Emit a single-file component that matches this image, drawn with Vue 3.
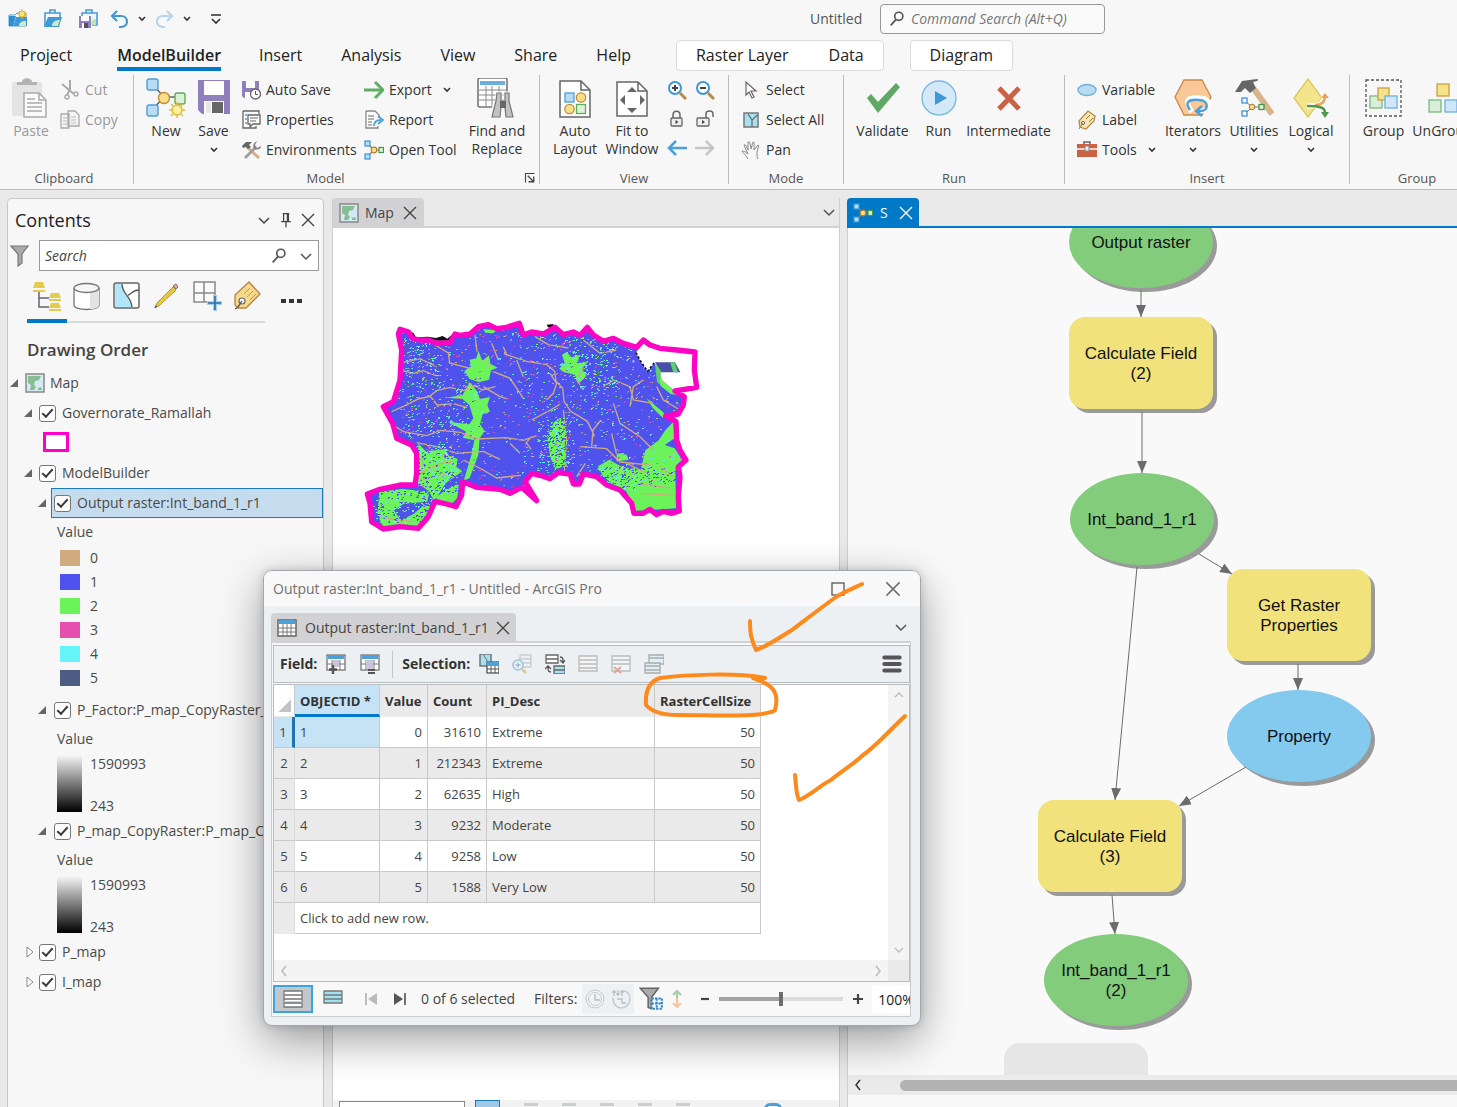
<script setup>
import { h, ref } from 'vue'

const glyphs = {
  newProject: '<path d="M1 6h6l2-2h9v13H1z" fill="#fff" stroke="#4a9bd4"/><path d="M1 7h7l-3 10H1z" fill="#2f8fd3"/><path d="M8 8h11v9H5z" fill="#3f9bd8"/><path d="M11 17c0-3 2-5 7-5v5z" fill="#cfe9c8"/><circle cx="14" cy="5" r="3" fill="#f6e27a" stroke="#dcb92e"/><path d="M14 0v2M14 8v2M9 5h2M17 5h2M11 2l1 1M16 7l1 1M17 2l-1 1M12 7l-1 1" stroke="#dcb92e"/>',
  openProject: '<path d="M2 17V4h15v5M7 4V1h5v3" fill="none" stroke="#4a9bd4" stroke-width="1.600"/><path d="M5 8h14l-3 10H1z" fill="#3f9bd8"/><path d="M9 17c0-4 3-6 8-6l-2 6z" fill="#cfe9c8"/>',
  saveProject: '<path d="M4 8V4h15v12h-5M8 4V1h6v3" fill="#e9f4fb" stroke="#4a9bd4" stroke-width="1.600"/><path d="M13 16c0-4 2-6 5-6v6z" fill="#bfe0b8"/><rect x="1" y="7" width="12" height="12" fill="#8f7fbd"/><rect x="3" y="7" width="8" height="5" fill="#fff"/><rect x="4" y="14" width="6" height="5" fill="#fff"/><rect x="6" y="14" width="4" height="5" fill="#555"/>',
  undo: '<path d="M7 2L2 7l5 5M2 7h9c8 0 8 11 0 11H9" fill="none" stroke="#3f97d3" stroke-width="2.200"/>',
  redo: '<path d="M12 2l5 5-5 5M17 7H8c-8 0-8 11 0 11h2" fill="none" stroke="#b5d6ea" stroke-width="2.200"/>',
  chev: '<path d="M7 8l3 3 3-3" fill="none" stroke="currentColor" stroke-width="1.600"/>',
  chevWide: '<path d="M5 8l5 5 5-5" fill="none" stroke="currentColor" stroke-width="1.500"/>',
  chevL: '<path d="M12 5l-4 5 4 5" fill="none" stroke="currentColor" stroke-width="1.500"/>',
  chevR: '<path d="M8 5l4 5-4 5" fill="none" stroke="currentColor" stroke-width="1.500"/>',
  chevU: '<path d="M6 12l4-4 4 4" fill="none" stroke="currentColor" stroke-width="1.300"/>',
  chevD: '<path d="M6 8l4 4 4-4" fill="none" stroke="currentColor" stroke-width="1.300"/>',
  custom: '<path d="M5 6h10M6 10l4 4 4-4" fill="none" stroke="#333" stroke-width="1.700"/>',
  search: '<circle cx="12" cy="7" r="4.500" fill="none" stroke="#555" stroke-width="1.800"/><path d="M9 10.500L3 17" stroke="#555" stroke-width="2"/>',
  close: '<path d="M4 4l12 12M16 4L4 16" fill="none" stroke="currentColor" stroke-width="1.400"/>',
  pin: '<path d="M6 2h8M7 2v10M13 2v10M4 12h12M10 12v7" fill="none" stroke="#444" stroke-width="1.600"/><path d="M11 2h2v10h-2z" fill="#444"/>',
  paste: '<rect x="1" y="4" width="30" height="34" rx="2" fill="#e4e4e4"/><path d="M6 4h5c0-5 10-5 10 0h5v3H6z" fill="#b3b3b3"/><path d="M13 15h15l7 7v17H13z" fill="#fafafa" stroke="#aaa" stroke-width="1.500"/><path d="M28 15v7h7M16 21h8M16 25h15M16 29h15M16 33h15" stroke="#aaa" fill="none" stroke-width="1.500"/>',
  cut: '<path d="M2 4l12 10M10 0v9l-3 6" stroke="#aaa" stroke-width="2" fill="none"/><circle cx="7" cy="17" r="2" fill="none" stroke="#aaa" stroke-width="1.500"/><circle cx="16" cy="14" r="2" fill="none" stroke="#aaa" stroke-width="1.500"/>',
  copy: '<path d="M1 4h8v14H1zM8 1h7l4 4v11H8z" fill="#f4f4f4" stroke="#aaa" stroke-width="1.300"/><path d="M3 8h4M3 11h4M3 14h4M11 7h5M11 10h5M11 13h5" stroke="#bbb"/>',
  modelNew: '<path d="M6 6l12 13L6 32M18 19h16" stroke="#666" stroke-width="1.600" fill="none"/><rect x="1" y="1" width="11" height="11" rx="2" fill="#b9dcf2" stroke="#4b9fda" stroke-width="1.400"/><rect x="1" y="27" width="11" height="11" rx="2" fill="#b9dcf2" stroke="#4b9fda" stroke-width="1.400"/><circle cx="18" cy="20" r="5.500" fill="#f8e08a" stroke="#c48a3c" stroke-width="1.400"/><rect x="29" y="15" width="10" height="11" rx="2" fill="#dff0d8" stroke="#5cab60" stroke-width="1.400"/><circle cx="31" cy="32" r="5" fill="#fbefa0" stroke="#e0bd3c" stroke-width="1.500"/><path d="M31 24v3M31 37v3M23 32h3M36 32h3M25 26l2 2M35 36l2 2M37 26l-2 2M27 36l-2 2" stroke="#e0bd3c" stroke-width="1.400"/>',
  save: '<path d="M4 2h32v34H8l-4-4z" fill="#8f7fbd"/><rect x="10" y="3" width="20" height="14" fill="#fff"/><rect x="10" y="23" width="20" height="13" fill="#fff"/><rect x="18" y="24" width="11" height="11" fill="#666"/><rect x="12" y="24" width="5" height="11" fill="#e6e6e6"/>',
  autosave: '<path d="M1 1h17v17H3l-2-2z" fill="#8f7fbd"/><rect x="5" y="1" width="9" height="7" fill="#fff"/><rect x="4" y="12" width="7" height="6" fill="#fff"/><circle cx="14.500" cy="14" r="5" fill="#fff" stroke="#666" stroke-width="1.300"/><path d="M14.500 11v3.500H17" fill="none" stroke="#555"/>',
  props: '<path d="M2 1h16v3M2 1v17h13v-2" fill="#fff" stroke="#666" stroke-width="1.300"/><path d="M4 5h2M4 9h2M4 13h2" stroke="#4b9fda" stroke-width="1.500"/><path d="M7 5h12v9h-7l-3 3v-3H7z" fill="#fff" stroke="#666" stroke-width="1.300"/><path d="M9 8h8M9 11h6" stroke="#666" stroke-width="1.200"/>',
  env: '<path d="M6 7l12 11" stroke="#d5ae86" stroke-width="3"/><path d="M1 6l4-4h6L8 5l2 2-3 2-2-2-3 1z" fill="#666"/><path d="M15 7L4 18" stroke="#a0a0a0" stroke-width="3"/><path d="M16 1l-2 4 2 3 4-2c0 4-4 4-7 3-2-3 0-7 3-8z" fill="#888"/>',
  exportI: '<path d="M0 10h17" stroke="#5fae64" stroke-width="3"/><path d="M11 2l8 8-8 8" fill="none" stroke="#5fae64" stroke-width="3"/>',
  report: '<path d="M2 1h9l4 4v3M2 1v17h12v-2" fill="#fff" stroke="#888" stroke-width="1.300"/><path d="M4 6h6M4 9h6M4 12h4M4 15h4" stroke="#999" stroke-width="1.300"/><path d="M10 16c0-4 2-6 7-6M14 6l5 4-5 4" fill="none" stroke="#4b9fda" stroke-width="1.800"/>',
  model: '<path d="M4 4l6 6-6 6M10 10h8" stroke="#777" stroke-width="1.200" fill="none"/><rect x="1" y="1" width="5" height="5" fill="#b9dcf2" stroke="#3b94d6" stroke-width="1.200"/><rect x="1" y="14" width="5" height="5" fill="#b9dcf2" stroke="#3b94d6" stroke-width="1.200"/><circle cx="10" cy="10" r="2.800" fill="#f8e08a" stroke="#c07a2c" stroke-width="1.200"/><rect x="15" y="7.500" width="4.500" height="5" fill="#dff0d8" stroke="#3c9a46" stroke-width="1.200"/>',
  find: '<rect x="1" y="0" width="29" height="29" rx="2" fill="#fff" stroke="#777" stroke-width="1.600"/><rect x="3" y="3" width="25" height="4" fill="#6aaede"/><path d="M2 12h27M2 17h27M2 22h27M9 8v20M15 8v20M22 8v20" stroke="#888"/><path d="M20 15h4v9h4v-9h4v9l3 15h-8l-1-9h-2l-1 9h-9l4-15h2z" fill="#c9c9c9" stroke="#f7f7f7" stroke-width="3"/><path d="M20 15h4v8h4v-8h4v8l4 16h-7l-1-10h-4l-1 10h-8l4-16z" fill="#c2c2c2" stroke="#777" stroke-width="1.200"/><rect x="23" y="23" width="6" height="7" fill="#666"/>',
  auto: '<path d="M5 3h21l9 9v27H5z" fill="#fff" stroke="#666" stroke-width="1.500"/><path d="M26 3v9h9" fill="none" stroke="#666" stroke-width="1.500"/><rect x="10" y="15" width="9" height="9" fill="#b9dcf2" stroke="#4b9fda" stroke-width="1.300"/><circle cx="26" cy="19.500" r="4.700" fill="#f8e08a" stroke="#c48a3c" stroke-width="1.300"/><circle cx="14.500" cy="31" r="4.700" fill="#f8e08a" stroke="#c48a3c" stroke-width="1.300"/><rect x="21.500" y="26.500" width="9" height="9" fill="#dff0d8" stroke="#5cab60" stroke-width="1.300"/>',
  fit: '<path d="M5 4h21l9 9v25H5z" fill="#fff" stroke="#666" stroke-width="1.500"/><path d="M26 4v9h9" fill="none" stroke="#666" stroke-width="1.500"/><path d="M20 9l5 5H15zM20 35l5-5H15zM8 22l5-5v10zM33 22l-5-5v10z" fill="#666"/>',
  zoomIn: '<circle cx="8" cy="8" r="6" fill="#fff" stroke="#3f97d3" stroke-width="2"/><path d="M13 13l6 6" stroke="#b98948" stroke-width="3"/><path d="M8 5v6M5 8h6" stroke="#444" stroke-width="2"/>',
  zoomOut: '<circle cx="8" cy="8" r="6" fill="#fff" stroke="#3f97d3" stroke-width="2"/><path d="M13 13l6 6" stroke="#b98948" stroke-width="3"/><path d="M5 8h6" stroke="#444" stroke-width="2"/>',
  lock: '<rect x="4" y="9" width="11" height="8" rx="1" fill="#eee" stroke="#666" stroke-width="1.300"/><path d="M6 9V6c0-5 7-5 7 0v3" fill="none" stroke="#666" stroke-width="1.500"/><path d="M8.500 11l3 2-3 2z" fill="#444"/>',
  unlock: '<rect x="2" y="9" width="12" height="8" rx="1" fill="#eee" stroke="#666" stroke-width="1.300"/><path d="M11 9V5c0-4 7-4 7 0v3" fill="none" stroke="#666" stroke-width="1.500"/><path d="M7 11l3 2-3 2z" fill="#444"/>',
  left: '<path d="M20 10H3M9 3l-7 7 7 7" fill="none" stroke="#4b9fda" stroke-width="2.500"/>',
  right: '<path d="M0 10h17M11 3l7 7-7 7" fill="none" stroke="#c6c6c6" stroke-width="2.500"/>',
  cursor: '<path d="M5 2v13l3-3 3 6 2-1-3-6h5z" fill="#fff" stroke="#666" stroke-width="1.200"/>',
  selectAll: '<rect x="3" y="3" width="14" height="14" fill="#a8e0f2" stroke="#777" stroke-width="1.500"/><path d="M7 4l4 6v7M11 10c2-1 3-4 6-5" fill="none" stroke="#666" stroke-width="1.200"/>',
  pan: '<path d="M7 19c-2-4-5-6-6-8 2 0 4 1 6 3L3 5c1-1 2 0 4 5L7 2c2-1 2 1 3 7l2-7c2 0 1 2 1 8l4-5c2 0-1 4-1 8 0 3 0 4 1 6" fill="none" stroke="#888" stroke-width="1"/>',
  validate: '<path d="M4 20l4-4 7 8L33 5l4 4-22 26z" fill="#5fa864"/>',
  run: '<circle cx="20" cy="20" r="17" fill="#d3e9f7" stroke="#7ab8e2" stroke-width="1.300"/><path d="M16 13l12 7-12 7z" fill="#3f97d3"/>',
  interm: '<path d="M10 10l20 21M30 10L10 31" stroke="#cb6145" stroke-width="5"/>',
  variable: '<ellipse cx="10" cy="10" rx="9" ry="5.500" fill="#b9dcf2" stroke="#6db0e0" stroke-width="1.300"/>',
  tag: '<path d="M2 11L11 1l7 5-1 5-8 8-6-2z" fill="#f9e7b0" stroke="#b6884a" stroke-width="1.300"/><circle cx="6" cy="13" r="1.600" fill="#fff" stroke="#666"/><path d="M9 9l4-4M12 12l4-4M6 13l-4 6" stroke="#a07a46" fill="none"/>',
  toolbox: '<path d="M7 4V2h6v2" fill="none" stroke="#666" stroke-width="1.500"/><rect x="0" y="4" width="20" height="13" fill="#cb6145"/><path d="M0 9h20" stroke="#f7f7f7" stroke-width="1.500"/><rect x="8" y="6" width="4" height="5" fill="#eee" stroke="#888"/>',
  iter: '<path d="M11 2h18l9 17-9 18H11L2 19z" fill="#f9c896" stroke="#c98a4a" stroke-width="1.300"/><path d="M19 34c-9-13-4-15 8-14 12 0 11 12 2 13h-5" fill="none" stroke="#fff" stroke-width="5"/><path d="M17 32c-6-8-1-11 9-10 10 0 10 11 2 11h-4M29 28l-6 5 6 5" fill="none" stroke="#4b9fda" stroke-width="2.400"/>',
  util: '<path d="M20 11l18 25" stroke="#d9b38c" stroke-width="6"/><path d="M1 14l7-11 15-2c3 1 0 2-4 3l3 6-6 5-5-5-4 4z" fill="#666"/><path d="M11 23l7 6-7 7M18 29h8" stroke="#777" fill="none"/><rect x="8" y="20" width="5" height="5" fill="#fff" stroke="#3b94d6" stroke-width="1.300"/><rect x="8" y="33" width="5" height="5" fill="#fff" stroke="#3b94d6" stroke-width="1.300"/><circle cx="18" cy="29" r="2.800" fill="#f8e08a" stroke="#b07030"/><rect x="25" y="26.500" width="5" height="5" fill="#dff0d8" stroke="#3c9a46" stroke-width="1.300"/>',
  logic: '<path d="M17 1l14 19-14 19L3 20z" fill="#f2e58c" stroke="#dac85a" stroke-width="1.300"/><path d="M16 28c12 0 17-1 17-11" stroke="#fff" stroke-width="5" fill="none"/><path d="M24 27c8 0 10-4 10-9" fill="none" stroke="#f0a050" stroke-width="2.400"/><path d="M30 20l4-5 4 5z" fill="#f0a050"/><path d="M16 28c12 0 18 1 18 7" fill="none" stroke="#4d9850" stroke-width="2.400"/><path d="M30 34l4 6 4-6z" fill="#4d9850"/>',
  group: '<rect x="2" y="2" width="35" height="36" fill="none" stroke="#555" stroke-width="1.300" stroke-dasharray="3 2"/><rect x="6" y="18" width="12" height="12" fill="#d9efd9" stroke="#7cb97f" stroke-width="1.300"/><rect x="14" y="10" width="11" height="12" fill="#f6e28a" stroke="#c9a040" stroke-width="1.300"/><rect x="21" y="18" width="12" height="12" fill="#cfe7f8" stroke="#6db0e0" stroke-width="1.300"/>',
  ungroup: '<rect x="6" y="22" width="12" height="12" fill="#d9efd9" stroke="#7cb97f" stroke-width="1.300"/><rect x="14" y="6" width="12" height="12" fill="#f6e28a" stroke="#c9a040" stroke-width="1.300"/><rect x="22" y="22" width="12" height="12" fill="#cfe7f8" stroke="#6db0e0" stroke-width="1.300"/>',
  launch: '<path d="M2 14V2h12" fill="none" stroke="#444" stroke-width="1.500"/><path d="M5 5l7 7M13 6v7H6" fill="none" stroke="#444" stroke-width="1.700"/>',
  funnel: '<path d="M2 1h17l-6 8v9l-4 3V9z" fill="#aaa" stroke="#777" stroke-width="1.200"/>',
  tree: '<path d="M8 10v16h10M8 17h10" fill="none" stroke="#666" stroke-width="1.500"/><path d="M4 1h8l2 6H2zM2 9h12v2H2zM20 12h8l2 5H18zM18 18h12v2H18zM20 22h8l2 5H18zM18 28h12v2H18z" fill="#e6cb4b"/>',
  db: '<path d="M3 7v17c0 6 25 6 25 0V7" fill="#fff" stroke="#777" stroke-width="1.300"/><path d="M19 11c6 0 9-2 9-4v17c0 2-3 4-9 4z" fill="#e2e2e2"/><ellipse cx="15.500" cy="7" rx="12.500" ry="4.500" fill="#f6f6f6" stroke="#777" stroke-width="1.300"/>',
  selTab: '<rect x="3" y="2" width="25" height="25" rx="2" fill="#fff" stroke="#666" stroke-width="1.500"/><path d="M4 3h7c0 10 9 12 10 23H4z" fill="#b0e6f7"/><path d="M11 3c0 10 9 12 10 23M17 14c3 0 4-5 11-5" fill="none" stroke="#555" stroke-width="1.300"/>',
  pencil: '<path d="M4 27l2-5L22 6l3 3L9 24z" fill="#e8c93e" stroke="#b29a3a"/><path d="M22 5l3-2 2 3-2 2z" fill="#e2a59a" stroke="#8c6c6c"/><path d="M3 27l2-3 1 2z" fill="#555"/>',
  gridAdd: '<rect x="3" y="1" width="21" height="20" fill="#fafafa" stroke="#888" stroke-width="1.500"/><path d="M13 1v20M3 12h21" stroke="#888" stroke-width="1.500"/><path d="M24 14v16M16 22h15" stroke="#9fd0ef" stroke-width="4"/><path d="M24 15v14M17 22h13" stroke="#2f6f9f" stroke-width="1.600"/>',
  bigTag: '<path d="M4 14L18 1l11 12-14 14H7l-3-3z" fill="#f6d98b" stroke="#b6884a" stroke-width="1.400"/><circle cx="11" cy="20" r="3" fill="#fff" stroke="#666" stroke-width="1.200"/><path d="M13 13l6-6M16 16l6-6M19 19l6-6" stroke="#c59a56"/><path d="M11 20c-3 3-2 6-7 8" fill="none" stroke="#555" stroke-width="1.300"/>',
  dots: '<path d="M5 18h5v4H5zM13 18h5v4h-5zM21 18h5v4h-5z" fill="#333"/>',
  mapI: '<rect x="1" y="1" width="18" height="18" fill="#d4e9f5" stroke="#888" stroke-width="1.500"/><path d="M3 3h13l-2 4-4 1-1 4 2 2-2 3H5l1-5-3-2zM13 15l3-1 1 3h-4z" fill="#86bd92"/>',
  table: '<rect x="1" y="2" width="18" height="16" fill="#fff" stroke="#666" stroke-width="1.500"/><rect x="2" y="2" width="16" height="4" fill="#4f9fd8"/><path d="M1 10h18M1 14h18M6 6v12M10 6v12M14 6v12" stroke="#777"/>',
  fieldAdd: '<rect x="1" y="1" width="18" height="15" fill="#fff" stroke="#777" stroke-width="1.300"/><rect x="2" y="1" width="16" height="4" fill="#4f9fd8"/><path d="M1 10h18M6 6v10M14 6v10" stroke="#777"/><rect x="7" y="6" width="6" height="7" fill="#c9c3dc"/><path d="M7 11v9M3 15.500h8" stroke="#555" stroke-width="2.400"/>',
  fieldCalc: '<rect x="1" y="1" width="18" height="15" fill="#fff" stroke="#777" stroke-width="1.300"/><rect x="2" y="1" width="16" height="4" fill="#4f9fd8"/><path d="M1 10h18M6 6v10M14 6v10" stroke="#777"/><rect x="6" y="6" width="7" height="9" fill="#c9c3dc"/><path d="M8 16h7M8 19h7" stroke="#555" stroke-width="1.800"/>',
  selAttr: '<rect x="1" y="0" width="11" height="12" fill="#a8e0f2" stroke="#666" stroke-width="1.300"/><path d="M5 1c0 3 3 3 3 6" fill="none" stroke="#666"/><rect x="8" y="8" width="12" height="11" fill="#fff" stroke="#555" stroke-width="1.300"/><rect x="8" y="8" width="12" height="4" fill="#4f9fd8"/><path d="M8 15h12M12 12v7M16 12v7" stroke="#555"/>',
  zoomSel: '<path d="M8 1h11v12H8zM8 5h11M8 9h11" fill="none" stroke="#bbb"/><circle cx="6" cy="11" r="5" fill="#e9f2f7" stroke="#9cc3de" stroke-width="1.500"/><path d="M10 15l4 4" stroke="#dcc3a0" stroke-width="2.500"/><path d="M6 8.500v5M3.500 11h5" stroke="#8ab"/>',
  switchSel: '<path d="M1 1h12v8H1zM1 5h12" fill="#fff" stroke="#666" stroke-width="1.300"/><path d="M9 12h11v8H9zM9 16h11" fill="#a8e0f2" stroke="#666" stroke-width="1.300"/><path d="M15 3c3 0 3 2 3 5M15 6l3 3 2-3M6 18c-3 0-3-2-3-5M0 15l3-3 3 3" fill="none" stroke="#555" stroke-width="1.300"/>',
  rowsOff: '<path d="M1 2h18v15H1zM1 6h18M1 10h18M1 14h18" fill="#f5f5f5" stroke="#bbb" stroke-width="1.300"/>',
  rowsDel: '<path d="M1 2h18v15H1zM1 6h18M1 10h18" fill="#f0f5f7" stroke="#bbb" stroke-width="1.300"/><path d="M3 13l7 6M10 13l-7 6" stroke="#dba79b" stroke-width="2"/>',
  rowsCopy: '<path d="M5 1h15v9H5zM5 4h15" fill="#dff1f6" stroke="#aaa" stroke-width="1.300"/><path d="M1 9h15v10H1zM1 12h15M1 16h15" fill="#dff1f6" stroke="#aaa" stroke-width="1.300"/>',
  burger: '<path d="M3 4h14M3 10h14M3 16h14" stroke="#555" stroke-width="3.600" stroke-linecap="round"/>',
  rowsAll: '<path d="M1 2h18v16H1z" fill="#fff" stroke="#777" stroke-width="1.300"/><path d="M1 12h18v3H1z" fill="#a8e0f2"/><path d="M1 6h18M1 10h18M1 14h18" stroke="#777" stroke-width="1.300"/>',
  rowsSel: '<path d="M1 2h18v12H1zM1 6h18M1 10h18" fill="#a0e2f2" stroke="#777" stroke-width="1.300"/>',
  prev: '<path d="M5 4v12" stroke="#aaa" stroke-width="1.500"/><path d="M16 4v12l-9-6z" fill="#bbb"/>',
  next: '<path d="M16 4v12" stroke="#444" stroke-width="1.500"/><path d="M5 4v12l9-6z" fill="#555"/>',
  clock: '<circle cx="10" cy="10" r="9" fill="#eef2f3" stroke="#c3cbd0"/><circle cx="10" cy="10" r="6.500" fill="none" stroke="#c3cbd0"/><path d="M10 5v6h5" fill="none" stroke="#b5bfc4" stroke-width="1.400"/>',
  range: '<path d="M2 9c0 14 17 12 17 1 0-5-3-8-7-8" fill="none" stroke="#c3cbd0" stroke-width="1.500"/><path d="M3 1v6M7 1v6M11 1v6M1 3h4M5 5h4M9 3h4M6 10h5v4h4" fill="none" stroke="#b5c2c4" stroke-width="1.400"/>',
  funnelSel: '<path d="M1 1h16l-6 8v10l-3-1V9z" fill="#aaa" stroke="#666" stroke-width="1.300"/><path d="M11 10h9v9h-9zM11 14.500h9M15.500 10v9" fill="#fff" stroke="#2f84c8" stroke-width="1.800" stroke-dasharray="2 1"/>',
  updown: '<path d="M10 9V3M6 6l4-4 4 4" fill="none" stroke="#a8cba8" stroke-width="2.200"/><path d="M10 9v9M6 14l4 4 4-4" fill="none" stroke="#f2c79a" stroke-width="2.200"/>',
  maxi: '<rect x="4" y="4" width="12" height="12" fill="none" stroke="#555" stroke-width="1.300"/>',
  minus: '<path d="M6 10h8" stroke="#444" stroke-width="2.200"/>',
  plus: '<path d="M5 10h10M10 5v10" stroke="#444" stroke-width="2.200"/>',
  open: '<path d="M8 1v8H0z" fill="#666"/>',
  shut: '<path d="M3 0l6 5-6 5z" fill="#fff" stroke="#888"/>',
}
const Icon = (p) =>
  h('svg', {
    width: p.s ?? 20,
    height: p.s ?? 20,
    viewBox: `0 0 ${p.v ?? p.s ?? 20} ${p.v ?? p.s ?? 20}`,
    innerHTML: glyphs[p.n],
    'aria-hidden': 'true',
  })
Icon.props = ['n', 's', 'v']

const tabs = ['Project', 'ModelBuilder', 'Insert', 'Analysis', 'View', 'Share', 'Help']
const classes = [
  ['0', '#cfab7d'], ['1', '#5052ee'], ['2', '#6af45a'],
  ['3', '#e64fae'], ['4', '#66f4f8'], ['5', '#4c5c82'],
]
const ramps = ['P_Factor:P_map_CopyRaster_', 'P_map_CopyRaster:P_map_C']
const rows = [
  [1, 0, 31610, 'Extreme', 50],
  [2, 1, 212343, 'Extreme', 50],
  [3, 2, 62635, 'High', 50],
  [4, 3, 9232, 'Moderate', 50],
  [5, 4, 9258, 'Low', 50],
  [6, 5, 1588, 'Very Low', 50],
]
const nodes = [
  { t: ['Output raster'], k: 'oval green', x: 221, y: -32 },
  { t: ['Calculate Field', '(2)'], k: 'box', x: 221, y: 89 },
  { t: ['Int_band_1_r1'], k: 'oval green', x: 222, y: 245 },
  { t: ['Get Raster', 'Properties'], k: 'box', x: 379, y: 341 },
  { t: ['Property'], k: 'oval blue', x: 379, y: 462 },
  { t: ['Calculate Field', '(3)'], k: 'box', x: 190, y: 572 },
  { t: ['Int_band_1_r1', '(2)'], k: 'oval green', x: 196, y: 706 },
  { t: [], k: 'box ghost', x: 156, y: 815 },
]
const edges = [
  [293, 62, 293, 89], [294, 184, 294, 245], [289, 339, 267, 572], [351, 326, 384, 346],
  [450, 436, 450, 462], [398, 539, 331, 578], [264, 667, 267, 706],
]
const zoom = ref(50)
const checked = ref({ gov: true, mb: true, out: true, r0: true, r1: true, pm: true, im: true })

// Land-class raster: cells are scattered per zone with a fixed seed.
const outline = 'M150 58L176 66L188 86L210 90L235 90L260 100L300 98L315 72L330 76L360 72L385 50L415 44L440 56L470 52L508 40L520 75L545 66L580 72L615 52L640 74L670 66L690 76L712 52L730 75L760 94L790 85L820 100L860 112L880 90L900 105L930 115L980 120L1035 126L1033 180L1040 232L975 243L1003 260L1000 285L985 312L948 318L978 335L980 390L990 420L1008 450L985 470L990 500L985 560L988 603L965 610L940 604L920 614L900 598L880 610L852 610L845 580L810 540L770 525L740 500L700 492L688 522L670 522L660 492L625 488L600 506L570 496L545 490L525 515L560 572L515 532L480 550L450 538L380 532L338 515L335 555L318 590L290 582L255 574L235 620L205 655L150 650L100 657L65 635L60 580L52 552L90 538L150 525L195 525L200 490L200 430L185 405L140 385L128 340L100 290L130 275L150 210L155 120L145 72Z'
const green = 'M385 122l12 30 20-16 4 25 22 12-20 8-6 28-30 8-28-10-16-24 20-14-4-20 20-4zM360 215l22 30 8 22 30-6-8 24 8 20-22 8-8 30 14 20-20 30-46-10 10-18-54-30 64 8 12-18-12-40-20-18-50-4 50-8zM375 380l14 4-4 50-26 70-18 8 24-80zM205 400l22 24 60-6 10 20 26 8-4 24 18 14-50 36-34 54-16-30-34-24zM88 545l70-8 80 8-6 30-70 6-30 20 20 30 40-20 30-26 20 6-20 54-30 14-90-4-20-40zM630 325l20 18-6 60 6 66-36 8-14-40-8-60 20-40zM636 134l14-8 14 16 28-8-12 26 34-4-20 20 16 20-22 24-14-26-34-8-12-10 16-18zM970 335l4 50-30 20 30 10 26 40-24 20 2 120-120 8-30-60-40-20-30-26-14-28 34-20 34 20 60 12 14-60 40-30 20-30zM800 430l30 4 6 16-36 4zM400 58l40 2-10 10-24-2zM920 190l20 10 26 36 20 20-24-4-30-24zM890 265l52 44-4 14-30-30zM260 560l40-30 26-6-4 40-20 20-42-8z'
const rivers = 'M125 305l40-18 40-20 36-8 20 26 50-4 40 12M240 258l20-16 40-10 40 10 36-16 20 14 40-10M150 180l40 10 30-8 40 16M130 345l30 20 70 12 40-16 60 6 50 20 90-4 50 8 40-14M200 398l60 12 60 20 80-6 50 24M340 450l60 30 40 24 70-8M255 105l40 24 4 30 60 16M375 75l6 50M425 100l20 50M460 110l10 24 60 20 60 10 24 20 4 30 20 20 4 40 20 30 50 30 20 40M545 330l60-32 26-16M555 80l40 24 60 10M790 280l20 60 60 40 40 40M700 240l-20-30 20-40M760 230l30-20 50 20 10 40 60 10M840 290l10-60 30-20M640 300l10 90-6 90M500 150l20 50M430 185l50 20 40 60M400 230l50 30 20 6M480 400l30 30M545 380l-16 18 14 20M600 190l20 30-10 30-20 20M690 410l80 6 40 40 100 10M785 370l14 60M680 500l26-40M725 410l4-50 24-30M920 230l20 40 50 30M930 470l40 30M860 520l100 14M870 550l100 6M90 620l50 10 60 6M210 510l90-20M210 490l60-30 40-4M150 160l60-14 50 24M700 90l50 40 50-10M830 460l60 30'
let seed = 7
const rnd = () => (seed = (seed * 16807) % 2147483647) / 2147483647
const scatter = (n, zones) => {
  let d = ''
  for (let i = 0; i < n; i++) {
    const z = zones[Math.floor(rnd() * zones.length)]
    const x = Math.round((z[0] + rnd() * z[2]) / 3) * 3
    const y = Math.round((z[1] + rnd() * z[3]) / 3) * 3
    d += `M${x} ${y}h${rnd() > 0.6 ? 6 : 3}v3h-3v${rnd() > 0.7 ? 3 : 0}h-3z`
  }
  return d
}
const wide = [[100, 50, 900, 480]]
const dense = [[150, 80, 120, 150], [560, 320, 100, 170], [60, 540, 190, 100], [200, 400, 120, 150], [660, 80, 150, 160], [160, 200, 240, 180], [740, 470, 120, 70], [500, 60, 300, 250]]
const cells = [
  ['#66e4f8', scatter(480, wide)], ['#66f4e8', scatter(650, dense)],
  ['#6af45a', scatter(300, dense)], ['#cfab7d', scatter(300, wide)],
  ['#5052ee', scatter(380, [[200, 400, 120, 150], [60, 540, 190, 100], [590, 320, 60, 170], [780, 470, 200, 60]])],
  ['#d94fc0', scatter(300, wide)], ['#4c5c82', scatter(300, dense)],
]
</script>

<template>
  <div class="app">
    <header class="titlebar">
      <div class="quick">
        <button aria-label="New project"><Icon n="newProject" /></button>
        <button aria-label="Open project"><Icon n="openProject" /></button>
        <button aria-label="Save project"><Icon n="saveProject" /></button>
        <button class="step" aria-label="Undo"><Icon n="undo" /></button>
        <button class="thin" aria-label="Undo list"><Icon n="chev" /></button>
        <button class="step" aria-label="Redo"><Icon n="redo" /></button>
        <button class="thin" aria-label="Redo list"><Icon n="chev" /></button>
        <button class="last" aria-label="Customize"><Icon n="custom" /></button>
      </div>
      <span class="doc">Untitled</span>
      <label class="cmd"><Icon n="search" s="18" v="20" /><input type="text" aria-label="Command Search" placeholder="Command Search (Alt+Q)" /></label>
    </header>

    <nav class="tabs">
      <button v-for="t in tabs" :key="t" :class="{ on: t === 'ModelBuilder' }">{{ t }}</button>
      <div class="ctx raster"><button>Raster Layer</button><button>Data</button></div>
      <div class="ctx"><button>Diagram</button></div>
    </nav>

    <div class="ribbon">
      <section class="group g-clip">
        <div class="body">
          <button class="big off"><Icon n="paste" s="40" /><span>Paste</span></button>
          <div class="col">
            <button class="small off"><Icon n="cut" /><span>Cut</span></button>
            <button class="small off"><Icon n="copy" /><span>Copy</span></button>
          </div>
        </div>
        <h2>Clipboard</h2>
      </section>
      <section class="group g-model">
        <div class="body">
          <button class="big"><Icon n="modelNew" s="40" /><span>New</span></button>
          <button class="big"><Icon n="save" s="40" /><span>Save</span><Icon n="chev" /></button>
          <div class="col">
            <button class="small"><Icon n="autosave" /><span>Auto Save</span></button>
            <button class="small"><Icon n="props" /><span>Properties</span></button>
            <button class="small"><Icon n="env" /><span>Environments</span></button>
          </div>
          <div class="col">
            <button class="small"><Icon n="exportI" /><span>Export</span><Icon n="chev" /></button>
            <button class="small"><Icon n="report" /><span>Report</span></button>
            <button class="small"><Icon n="model" /><span>Open Tool</span></button>
          </div>
          <button class="big"><Icon n="find" s="40" /><span>Find and<br />Replace</span></button>
        </div>
        <h2>Model</h2>
        <button class="launch" aria-label="Model options"><Icon n="launch" s="12" v="16" /></button>
      </section>
      <section class="group g-view">
        <div class="body">
          <button class="big"><Icon n="auto" s="40" /><span>Auto<br />Layout</span></button>
          <button class="big"><Icon n="fit" s="40" /><span>Fit to<br />Window</span></button>
          <div class="icons">
            <button aria-label="Zoom in"><Icon n="zoomIn" /></button>
            <button aria-label="Zoom out"><Icon n="zoomOut" /></button>
            <button aria-label="Lock"><Icon n="lock" /></button>
            <button aria-label="Unlock"><Icon n="unlock" /></button>
            <button aria-label="Previous extent"><Icon n="left" /></button>
            <button aria-label="Next extent"><Icon n="right" /></button>
          </div>
        </div>
        <h2>View</h2>
      </section>
      <section class="group g-mode">
        <div class="body">
          <div class="col">
            <button class="small"><Icon n="cursor" /><span>Select</span></button>
            <button class="small"><Icon n="selectAll" /><span>Select All</span></button>
            <button class="small"><Icon n="pan" /><span>Pan</span></button>
          </div>
        </div>
        <h2>Mode</h2>
      </section>
      <section class="group g-run">
        <div class="body">
          <button class="big"><Icon n="validate" s="40" /><span>Validate</span></button>
          <button class="big"><Icon n="run" s="40" /><span>Run</span></button>
          <button class="big"><Icon n="interm" s="40" /><span>Intermediate</span></button>
        </div>
        <h2>Run</h2>
      </section>
      <section class="group g-insert">
        <div class="body">
          <div class="col">
            <button class="small"><Icon n="variable" /><span>Variable</span></button>
            <button class="small"><Icon n="tag" /><span>Label</span></button>
            <button class="small"><Icon n="toolbox" /><span>Tools</span><Icon n="chev" /></button>
          </div>
          <button class="big"><Icon n="iter" s="40" /><span>Iterators</span><Icon n="chev" /></button>
          <button class="big"><Icon n="util" s="40" /><span>Utilities</span><Icon n="chev" /></button>
          <button class="big"><Icon n="logic" s="40" /><span>Logical</span><Icon n="chev" /></button>
        </div>
        <h2>Insert</h2>
      </section>
      <section class="group g-group">
        <div class="body">
          <button class="big"><Icon n="group" s="40" /><span>Group</span></button>
          <button class="big"><Icon n="ungroup" s="40" /><span>UnGroup</span></button>
        </div>
        <h2>Group</h2>
      </section>
    </div>

    <main class="work">
      <aside class="contents">
        <div class="phead">
          <h1>Contents</h1>
          <button aria-label="Menu"><Icon n="chevWide" /></button>
          <button aria-label="Pin"><Icon n="pin" s="16" v="20" /></button>
          <button aria-label="Close"><Icon n="close" /></button>
        </div>
        <div class="find">
          <Icon n="funnel" s="22" />
          <label><input type="text" aria-label="Search" placeholder="Search" /><Icon n="search" s="18" v="20" /><Icon n="chevWide" /></label>
        </div>
        <div class="views">
          <button class="on" aria-label="Drawing order"><Icon n="tree" s="32" /></button>
          <button aria-label="Data source"><Icon n="db" s="32" /></button>
          <button aria-label="Selection"><Icon n="selTab" s="32" /></button>
          <button aria-label="Editing"><Icon n="pencil" s="32" /></button>
          <button aria-label="Snapping"><Icon n="gridAdd" s="32" /></button>
          <button aria-label="Labeling"><Icon n="bigTag" s="32" /></button>
          <button class="more" aria-label="More"><Icon n="dots" s="32" /></button>
        </div>
        <h3>Drawing Order</h3>
        <div class="tree">
          <div class="row l0"><Icon n="open" s="10" /><Icon n="mapI" /><span>Map</span></div>
          <div class="row l1"><Icon n="open" s="10" /><label><input v-model="checked.gov" type="checkbox" />Governorate_Ramallah</label></div>
          <div class="symbol"><i></i></div>
          <div class="row l1"><Icon n="open" s="10" /><label><input v-model="checked.mb" type="checkbox" />ModelBuilder</label></div>
          <div class="row l2 sel"><Icon n="open" s="10" /><label><input v-model="checked.out" type="checkbox" />Output raster:Int_band_1_r1</label></div>
          <div class="value">Value</div>
          <ul>
            <li v-for="[n, c] in classes" :key="n"><i :style="{ background: c }"></i>{{ n }}</li>
          </ul>
          <template v-for="(r, i) in ramps" :key="r">
            <div class="row l2"><Icon n="open" s="10" /><label><input v-model="checked['r' + i]" type="checkbox" />{{ r }}</label></div>
            <div class="value">Value</div>
            <div class="ramp"><i></i><div><span>1590993</span><span>243</span></div></div>
          </template>
          <div class="row l1"><Icon n="shut" s="10" /><label><input v-model="checked.pm" type="checkbox" />P_map</label></div>
          <div class="row l1"><Icon n="shut" s="10" /><label><input v-model="checked.im" type="checkbox" />I_map</label></div>
        </div>
      </aside>

      <section class="mapview">
        <div class="strip">
          <div class="vtab"><Icon n="mapI" /><span>Map</span><button aria-label="Close Map"><Icon n="close" /></button></div>
          <button class="list" aria-label="Views"><Icon n="chevWide" /></button>
        </div>
        <div class="map">
          <svg class="raster-img" viewBox="0 0 1080 705" role="img" aria-label="Raster map of Ramallah">
            <defs><clipPath id="edge"><path :d="outline" /></clipPath></defs>
            <path d="M170 66l20 2 8 14 36-2 24 4 20-6 14 8 16-14v20H180zM590 44l20-2 0 14-16-4zM1000 490l-10 60z" fill="#111" />
            <g clip-path="url(#edge)">
              <path :d="outline" fill="#5052ee" />
              <path :d="green" fill="#6af45a" />
              <path :d="rivers" class="river" />
              <path v-for="[c, d] in cells" :key="c" :d="d" :fill="c" />
              <path d="M858 128l25-40 160 30v118l-72 4-34-30-10-26-14-24-20 24-22-30z" fill="#fff" />
              <path d="M858 128l14 26 21 30 20-26" class="rim" />
              <path d="M915 157h60l16 30h-58z" fill="#4850a8" />
              <path d="M960 157h14l10 30h-14zM915 160l18 24-4 40 12 14-20-22z" fill="#5ccf6e" />
            </g>
            <path :d="outline" class="border" />
          </svg>
        </div>
        <div class="mapbar"><i class="scale"></i><i class="tog"></i><i></i><i></i><i></i><i></i><i></i><i class="fresh"></i></div>
      </section>

      <section class="model">
        <div class="strip">
          <div class="vtab"><Icon n="model" /><span>S</span><button aria-label="Close model"><Icon n="close" /></button></div>
        </div>
        <div class="canvas">
          <div v-for="(n, i) in nodes" :key="i" :class="['node', n.k]" :style="{ left: n.x + 'px', top: n.y + 'px' }">
            <span v-for="l in n.t" :key="l">{{ l }}</span>
          </div>
          <svg class="edges" width="610" height="846">
            <defs>
              <marker id="arrow" viewBox="0 0 12 10" refX="12" refY="5" markerWidth="12" markerHeight="10" markerUnits="userSpaceOnUse" orient="auto"><path d="M0 0l12 5-12 5z" fill="#6c6c6c" /></marker>
            </defs>
            <line v-for="(e, i) in edges" :key="i" :x1="e[0]" :y1="e[1]" :x2="e[2]" :y2="e[3]" marker-end="url(#arrow)" />
          </svg>
        </div>
        <div class="hscroll"><Icon n="chevL" /><i></i></div>
        <div class="foot"></div>
      </section>
    </main>

    <section class="window" role="dialog" aria-label="Attribute table">
      <div class="wtitle">
        <span>Output raster:Int_band_1_r1 - Untitled - ArcGIS Pro</span>
        <button aria-label="Maximize"><Icon n="maxi" /></button>
        <button aria-label="Close window"><Icon n="close" s="22" v="20" /></button>
      </div>
      <div class="wtabs">
        <div class="wtab"><Icon n="table" /><span>Output raster:Int_band_1_r1</span><button aria-label="Close table"><Icon n="close" /></button></div>
        <button class="list" aria-label="Tables"><Icon n="chevWide" /></button>
      </div>
      <div class="frame">
        <div class="tools">
          <b>Field:</b>
          <button aria-label="Add field"><Icon n="fieldAdd" /></button>
          <button aria-label="Calculate field"><Icon n="fieldCalc" /></button>
          <i></i>
          <b>Selection:</b>
          <div class="seltools">
            <button v-for="g in ['selAttr', 'zoomSel', 'switchSel', 'rowsOff', 'rowsDel', 'rowsCopy']" :key="g" :aria-label="g"><Icon :n="g" /></button>
          </div>
          <button class="menu" aria-label="Menu"><Icon n="burger" s="22" v="20" /></button>
        </div>
        <div class="grid">
          <div class="sheet">
            <table>
              <thead>
                <tr><th class="corner"></th><th class="oid">OBJECTID *</th><th class="val">Value</th><th class="cnt">Count</th><th class="desc">PI_Desc</th><th class="size">RasterCellSize</th></tr>
              </thead>
              <tbody>
                <tr v-for="r in rows" :key="r[0]">
                  <th>{{ r[0] }}</th><td>{{ r[0] }}</td><td class="num">{{ r[1] }}</td><td class="num">{{ r[2] }}</td><td>{{ r[3] }}</td><td class="num">{{ r[4] }}</td>
                </tr>
                <tr class="add"><th></th><td colspan="5">Click to add new row.</td></tr>
              </tbody>
            </table>
          </div>
          <div class="vs"><Icon n="chevU" /><Icon n="chevD" /></div>
          <div class="hs"><Icon n="chevL" /><Icon n="chevR" /></div>
          <div class="cornerbox"></div>
        </div>
        <div class="status">
          <button class="show on" aria-label="Show all records"><Icon n="rowsAll" /></button>
          <button class="show" aria-label="Show selected records"><Icon n="rowsSel" /></button>
          <button class="nav" aria-label="Previous"><Icon n="prev" /></button>
          <button class="nav" aria-label="Next"><Icon n="next" /></button>
          <span class="count">0 of 6 selected</span>
          <span class="filters">Filters:</span>
          <div class="pair"><button aria-label="Time filter"><Icon n="clock" /></button><button aria-label="Range filter"><Icon n="range" /></button></div>
          <button class="extent" aria-label="Extent filter"><Icon n="funnelSel" s="24" v="21" /></button>
          <button class="auto" aria-label="Auto scroll"><Icon n="updown" /></button>
          <button aria-label="Zoom out"><Icon n="minus" /></button>
          <input v-model="zoom" type="range" aria-label="Table zoom" />
          <button aria-label="Zoom in"><Icon n="plus" /></button>
          <input class="pct" type="text" aria-label="Zoom percent" value="100%" />
        </div>
      </div>
      <svg class="ink" width="658" height="456" viewBox="263 570 658 456" aria-hidden="true">
        <path d="M750 621c0 12 1 18 6 29 14-5 22-12 36-20 16-12 26-20 44-33 8-5 16-8 26-13" />
        <path d="M795 775c1 9 1 20 4 25 12-5 20-14 32-20 10-9 22-15 32-25 12-8 26-24 42-39" />
        <path d="M765 678c-30-6-80-3-105 0-12 4-15 14-14 27 6 7 18 10 32 10 30 0 60 2 84-1 8-2 12-2 13-4 5-18-3-26-22-32" />
      </svg>
    </section>
  </div>
</template>

<style>
html, body { margin: 0; overflow: hidden; }
</style>

<style scoped>
.app { position: relative; display: flex; flex-direction: column; height: 100vh; overflow: hidden; background: #e9e9e9; color: #333; font: 14px/18px "Open Sans", "Noto Sans", sans-serif; white-space: nowrap; }
.app *, .app *::before { box-sizing: border-box; }
button { margin: 0; padding: 0; border: 0; background: none; font: inherit; color: inherit; display: flex; align-items: center; justify-content: center; }
input { font: inherit; color: inherit; margin: 0; min-width: 0; }
svg { display: block; flex: none; }
h1, h2, h3, ul { margin: 0; padding: 0; font-weight: 400; }

.titlebar { display: flex; align-items: center; height: 38px; flex: none; background: #f7f7f7; }
.quick { display: flex; width: 810px; padding-left: 8px; }
.quick button { width: 20px; margin-right: 15px; }
.quick .step { margin: 0 2px 0 -3px; }
.quick .thin { margin-right: 6px; }
.quick .last { margin-left: 3px; }
.doc { color: #555; width: 70px; }
.cmd { display: flex; align-items: center; width: 225px; height: 30px; padding-left: 7px; border: 1px solid #999; border-radius: 4px; background: #fafafa; }
.cmd input, .find input { border: 0; background: none; outline: 0; flex: 1; padding: 0 5px; }
input::placeholder { font-style: italic; color: #777; opacity: 1; }

.tabs { display: flex; align-items: center; height: 34px; flex: none; background: #f7f7f7; padding-left: 20px; font-size: 16px; line-height: 22px; color: #222; gap: 39px; }
.tabs > button { height: 32px; border-bottom: 4px solid transparent; padding-top: 4px; }
.tabs .on { font-weight: 600; border-color: #0079c9; margin: 0 -1px 0 6px; }
.ctx { display: flex; gap: 40px; height: 31px; padding: 0 19px; background: #fff; border: 1px solid #dcdcdc; border-radius: 4px; margin-left: 6px; }
.ctx + .ctx { margin-left: -13px; }

.ribbon { display: flex; height: 118px; flex: none; background: #f7f7f7; border-bottom: 1px solid #bdbdbd; overflow: hidden; }
.group { position: relative; flex: none; margin: 3px 0 5px; border-right: 1px solid #bbb; display: flex; flex-direction: column; }
.group h2 { position: relative; margin-top: auto; text-align: center; font-size: 13px; line-height: 12px; color: #555; }
.body { display: grid; align-items: start; padding-left: 7px; }
.big { flex-direction: column; line-height: 18px; padding-top: 3px; }
.big span { margin-top: 4px; }
.col { display: flex; flex-direction: column; align-items: flex-start; }
.small { height: 30px; padding-left: 5px; }
.small span { margin-left: 5px; }
.small span + svg { margin-left: 5px; }
.off { color: #999; }
.g-clip { width: 134px; } .g-clip .body { grid-template-columns: 48px 70px; }
.g-clip h2 { padding-right: 5px; }
.g-model { width: 406px; } .g-model .body { grid-template-columns: 50px 45px 123px 103px 70px; }
.g-model h2 { padding-right: 22px; }
.g-view { width: 189px; } .g-view .body { grid-template-columns: 56px 58px 56px; }
.g-mode { width: 115px; } .g-mode .body { grid-template-columns: 100px; }
.g-run { width: 221px; } .g-run .body { grid-template-columns: 63px 49px 91px; }
.g-insert { width: 285px; } .g-insert .body { grid-template-columns: 90px 62px 60px 54px; }
.g-group { width: 135px; } .g-group .body { grid-template-columns: 53px 65px; }
.launch { position: absolute; right: 3px; bottom: 0; }
.icons { display: grid; grid-template-columns: 28px 28px; padding-left: 2px; }
.icons button { height: 29px; }

.work { flex: 1; min-height: 0; display: flex; padding-top: 8px; }
.contents { flex: none; width: 317px; margin-left: 7px; background: #f7f7f7; border: 1px solid #c8c8c8; border-bottom: 0; border-radius: 5px 5px 0 0; overflow: hidden; }
.phead { display: flex; align-items: center; height: 41px; padding: 0 4px 0 7px; color: #444; }
.phead h1 { flex: 1; font-size: 18px; line-height: 24px; color: #222; }
.phead button { width: 22px; }
.find { display: flex; align-items: center; padding: 0 4px 0 1px; gap: 8px; }
.find label { flex: 1; height: 31px; display: flex; align-items: center; background: #fff; border: 1px solid #999; padding-right: 2px; gap: 8px; color: #555; }
.find input::placeholder { color: #444; }
.views { display: flex; margin: 9px 0 0 19px; height: 43px; background: linear-gradient(#d9d9d9, #d9d9d9) 0 41px / 238px 2px no-repeat; }
.views button { width: 40px; height: 43px; align-items: flex-start; padding-top: 1px; border-bottom: 4px solid transparent; }
.views .on { border-color: #0079c9; }
.views .more { margin-left: 5px; }
h3 { font-size: 17px; line-height: 22px; font-weight: 600; margin: 16px 0 7px 19px; color: #444; }
.tree { color: #4a4a4a; }
.row { display: flex; align-items: center; height: 30px; }
.l0 { padding-left: 2px; gap: 5px; }
.l1 { padding-left: 16px; gap: 5px; }
.l2 { padding-left: 30px; gap: 3px; }
.row label { display: flex; align-items: center; gap: 6px; flex: 1; height: 30px; }
.l2 label { padding-left: 2px; border: 1px solid transparent; border-right: 0; }
.sel label { background: #c5dbee; border: 1px solid #1a7abf; }
.row input { appearance: none; width: 17px; height: 17px; border: 1px solid #777; border-radius: 3px; background: #fff; display: grid; place-items: center; }
.row input:checked::before { content: ""; width: 11px; height: 6px; border: solid #3a3a3a; border-width: 0 0 2px 2px; transform: translateY(-1px) rotate(-48deg); }
.symbol { height: 30px; padding: 4px 0 0 35px; }
.symbol i { display: block; width: 26px; height: 20px; border: 3px solid #f0c; background: #fff; }
.value { height: 28px; line-height: 28px; padding-left: 49px; font-weight: 500; }
ul { list-style: none; padding-bottom: 5px; }
li { display: flex; align-items: center; gap: 10px; height: 24px; padding-left: 52px; }
li i { width: 20px; height: 16px; }
.ramp { display: flex; height: 63px; padding: 2px 0 4px 49px; gap: 8px; }
.ramp i { width: 25px; background: linear-gradient(#f7f7f7, #000); }
.ramp div { display: flex; flex-direction: column; gap: 24px; }

.mapview { flex: none; width: 508px; margin-left: 8px; display: flex; flex-direction: column; border: solid #cfcfcf; border-width: 0 1px; }
.strip { display: flex; justify-content: space-between; align-items: flex-start; height: 30px; flex: none; border-bottom: 2px solid #d2d2d4; background: #e9e9e9; }
.vtab { display: flex; align-items: center; height: 28px; padding: 2px 4px 0 6px; background: #d2d2d4; border-radius: 4px 4px 0 0; gap: 6px; color: #444; }
.list { color: #555; height: 28px; }
.map { flex: 1; background: #fff; padding: 82px 0 0 17px; }
.raster-img { width: 360px; height: 235px; }
.river { fill: none; stroke: #cfab7d; stroke-width: 4; }
.rim { fill: none; stroke: #111; stroke-width: 5; stroke-dasharray: 7 6; }
.border { fill: none; stroke: #fc04c4; stroke-width: 16; stroke-linejoin: round; }
.mapbar { display: flex; gap: 24px; height: 7px; flex: none; padding-left: 6px; background: #f2f2f2; overflow: hidden; }
.mapbar i { height: 12px; width: 14px; border-top: 3px solid #c9cfca; margin-top: 3px; }
.mapbar .scale { width: 126px; margin: 1px -14px 0 0; border: 1px solid #888; background: #fff; }
.mapbar .tog { width: 25px; margin-top: 0; border: 1px solid #1a7abf; background: #9fc8e8; }
.mapbar .fresh { margin-left: 50px; width: 18px; border: 3px solid #4b9fda; border-radius: 9px; }

.model { flex: 1; min-width: 0; margin-left: 7px; display: flex; flex-direction: column; border-left: 1px solid #cfcfcf; }
.model .strip { border-color: #0079c9; margin-left: -1px; }
.model .vtab { background: #0079c9; color: #fff; gap: 7px; padding-right: 3px; }
.model .vtab button { margin-left: 1px; }
.canvas { position: relative; flex: 1; min-height: 0; overflow: hidden; background: #f9f9f9; }
.edges { position: absolute; left: 0; top: 0; }
.edges line { stroke: #6c6c6c; stroke-width: 1; }
.node { position: absolute; width: 144px; height: 92px; padding-top: 2px; display: flex; flex-direction: column; align-items: center; justify-content: center; font: 17px/20px "Liberation Sans", Arial, sans-serif; color: #111; box-shadow: 4px 4px 0 #9a9a9a; }
.box { background: #f2e27b; border-radius: 16px; }
.oval { border-radius: 50%; }
.green { background: #83cc7c; }
.blue { background: #83caee; }
.ghost { background: #e6e6e6; box-shadow: none; }
.hscroll { display: flex; align-items: center; height: 20px; flex: none; background: #ebebeb; }
.hscroll i { flex: 1; height: 11px; margin-left: 32px; background: #b3b3b3; border-radius: 6px 0 0 6px; }
.foot { height: 12px; flex: none; background: #f9f9f9; }

.window { position: absolute; left: 263px; top: 570px; width: 658px; height: 456px; padding: 0 9px 8px 7px; border: 1px solid #a5a8aa; border-radius: 9px; background: #ecf0f2; box-shadow: 0 14px 44px rgba(0, 0, 0, .38), 0 0 8px rgba(0, 0, 0, .16); display: flex; flex-direction: column; }
.wtitle { display: flex; align-items: center; height: 35px; flex: none; margin: 0 -9px 0 -7px; padding: 0 16px 0 9px; gap: 34px; background: #f8f8f8; border-radius: 8px 8px 0 0; color: #707070; }
.wtitle span { flex: 1; }
.wtabs { display: flex; justify-content: space-between; align-items: flex-end; height: 37px; flex: none; border-bottom: 2px solid #d2d2d4; }
.wtab { display: flex; align-items: center; height: 28px; padding: 2px 3px 0 6px; gap: 8px; background: #d2d2d4; border-radius: 4px 4px 0 0; color: #444; }
.wtab button { margin-left: -4px; }
.frame { flex: 1; min-height: 0; display: flex; flex-direction: column; border: 1px solid #c8ccce; border-top: 0; background: #f8f8f8; }
.tools { display: flex; align-items: center; height: 38px; flex: none; margin: 2px 0 1px 1px; padding: 0 6px; border: 1px solid #b8bcbe; background: #ecf0f2; }
.tools b { font-weight: 700; color: #333; }
.tools b + button { margin-left: 9px; }
.tools button + button { margin-left: 14px; }
.tools > i { width: 1px; height: 27px; background: #c4c8ca; margin: 0 9px 0 12px; }
.seltools { display: flex; margin-left: 9px; }
.seltools button + button { margin-left: 13px; }
.tools .menu { margin-left: auto; }
.grid { flex: 1; min-height: 0; margin-left: 1px; display: grid; grid-template: 1fr 21px / 1fr 21px; border: 1px solid #b8bcbe; background: #fff; }
table { border-collapse: separate; border-spacing: 0; table-layout: fixed; width: 487px; font-size: 13px; line-height: 16px; color: #444; }
th, td { height: 31px; padding: 0 5px; border: solid #c9c9c9; border-width: 0 1px 1px 0; text-align: left; font-weight: 400; }
thead th { height: 32px; background: #eaeaea; font-weight: 700; color: #333; border-bottom-color: #eaeaea; }
thead .corner { width: 21px; background: linear-gradient(135deg, #fff 50%, #c4c4c4 50%) 4px 14px / 13px 13px no-repeat, #fff; }
.oid { width: 85px; }
thead .oid { background: #c6e2f5; border-bottom: 3px solid #0079c9; padding-top: 2px; }
.val { width: 48px; } .cnt { width: 59px; } .desc { width: 168px; } .size { width: 106px; }
tbody th { background: #eaeaea; text-align: center; padding: 0; border-right-color: #ddd; }
tbody tr:nth-child(even) td { background: #eaeaea; }
tbody tr:first-child th { background: #c6e2f5; border-right: 3px solid #1b75b0; }
tbody tr:first-child th + td { background: #c6e2f5; }
.num { text-align: right; }
tbody .add td { background: #fff; }
.add th { border-bottom-color: #eaeaea; }
.vs, .hs { display: flex; justify-content: space-between; align-items: center; background: #f4f4f4; color: #bbb; }
.vs { flex-direction: column; }
.cornerbox { background: #eaeaea; }
.status { display: flex; align-items: center; height: 34px; flex: none; padding-left: 1px; color: #444; overflow: hidden; }
.status > * { flex: none; }
.show { width: 40px; height: 28px; border: 2px solid transparent; }
.show.on { background: #c3c6ca; border-color: #3ba3e0; }
.nav { margin-left: 8px; }
.count { margin-left: 12px; }
.filters { margin: 0 5px 0 19px; }
.pair { display: flex; gap: 6px; align-items: center; height: 30px; padding: 0 3px; margin-right: 5px; background: #edf1f3; }
.extent { margin-right: 4px; }
.auto { margin-right: 8px; }
input[type=range] { appearance: none; width: 124px; height: 20px; margin: 0 5px 0 4px; background: linear-gradient(90deg, #a3a3a3 50%, #dcdcdc 50%) center / 100% 4px no-repeat; }
input[type=range]::-webkit-slider-thumb { appearance: none; width: 4px; height: 14px; background: #6d6d6d; }
.pct { width: 60px; height: 28px; margin-left: 4px; border: 0; padding: 0 6px; background: #fff; color: #222; }
.ink { position: absolute; left: -1px; top: -1px; pointer-events: none; }
.ink path { fill: none; stroke: #ff8a1c; stroke-width: 4; stroke-linecap: round; stroke-linejoin: round; }
</style>
